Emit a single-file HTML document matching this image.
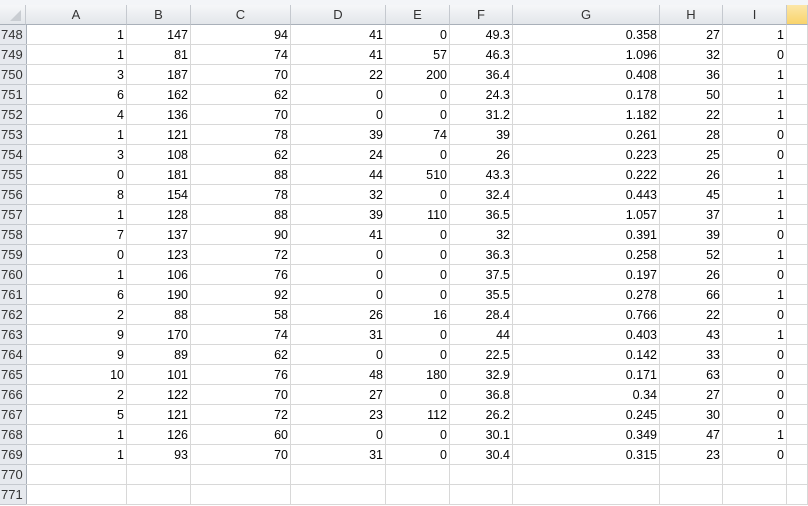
<!DOCTYPE html><html><head><style>
body{margin:0;width:808px;height:506px;overflow:hidden;background:#fff;font-family:"Liberation Sans",sans-serif;font-size:12.5px;color:#000;position:relative}
.top{position:absolute;left:0;top:0;width:808px;height:5px;background:#f3f5f8;border-bottom:1px solid #d5d8dc}
.h{position:absolute;top:5px;height:19px;background:linear-gradient(#f6f7f9,#e3e6ea);border-right:1px solid #c5c9cf;border-bottom:1px solid #a9b0b9;text-align:center;line-height:20px;color:#333;font-size:13px;box-sizing:content-box}
.rh{position:absolute;left:0;width:25px;height:19px;background:#e6e9ee;border-right:1px solid #a9b0b9;border-bottom:1px solid #c5c9cf;line-height:20px;padding-left:1px;color:#333;font-size:13px}
.c{position:absolute;height:19px;border-right:1px solid #d8d8d8;border-bottom:1px solid #d8d8d8;text-align:right;line-height:21px;box-sizing:content-box;padding-right:0}
.c span{padding-right:2px}
</style></head><body>
<div class="top"></div>
<div id="g"></div>
<script>
var xs=[0,26,127,191,291,386,450,513,660,723,787,808];
var names=["","A","B","C","D","E","F","G","H","I",""];
var html="";
for(var i=0;i<11;i++){var w=xs[i+1]-xs[i]-1;var st="left:"+xs[i]+"px;width:"+w+"px;";
if(i==10)st+="background:linear-gradient(#fce7a8,#f9d46b);";
html+='<div class="h" style="'+st+'">'+names[i]+'</div>';}
html+='<div style="position:absolute;left:10px;top:10px;width:0;height:0;border-left:11px solid transparent;border-bottom:11px solid #c9cdd2"></div>';
var d=[[1,147,94,41,0,49.3,0.358,27,1],[1,81,74,41,57,46.3,1.096,32,0],[3,187,70,22,200,36.4,0.408,36,1],[6,162,62,0,0,24.3,0.178,50,1],[4,136,70,0,0,31.2,1.182,22,1],[1,121,78,39,74,39,0.261,28,0],[3,108,62,24,0,26,0.223,25,0],[0,181,88,44,510,43.3,0.222,26,1],[8,154,78,32,0,32.4,0.443,45,1],[1,128,88,39,110,36.5,1.057,37,1],[7,137,90,41,0,32,0.391,39,0],[0,123,72,0,0,36.3,0.258,52,1],[1,106,76,0,0,37.5,0.197,26,0],[6,190,92,0,0,35.5,0.278,66,1],[2,88,58,26,16,28.4,0.766,22,0],[9,170,74,31,0,44,0.403,43,1],[9,89,62,0,0,22.5,0.142,33,0],[10,101,76,48,180,32.9,0.171,63,0],[2,122,70,27,0,36.8,0.34,27,0],[5,121,72,23,112,26.2,0.245,30,0],[1,126,60,0,0,30.1,0.349,47,1],[1,93,70,31,0,30.4,0.315,23,0],null,null];
for(var r=0;r<24;r++){var y=25+r*20;
html+='<div class="rh" style="top:'+y+'px">'+(748+r)+'</div>';
for(var c=1;c<11;c++){var w=xs[c+1]-xs[c]-1;var v=(d[r]&&c<10)?d[r][c-1]:"";
html+='<div class="c" style="top:'+y+'px;left:'+xs[c]+'px;width:'+w+'px"><span>'+v+'</span></div>';}}
document.getElementById("g").innerHTML=html;
</script>
</body></html>
